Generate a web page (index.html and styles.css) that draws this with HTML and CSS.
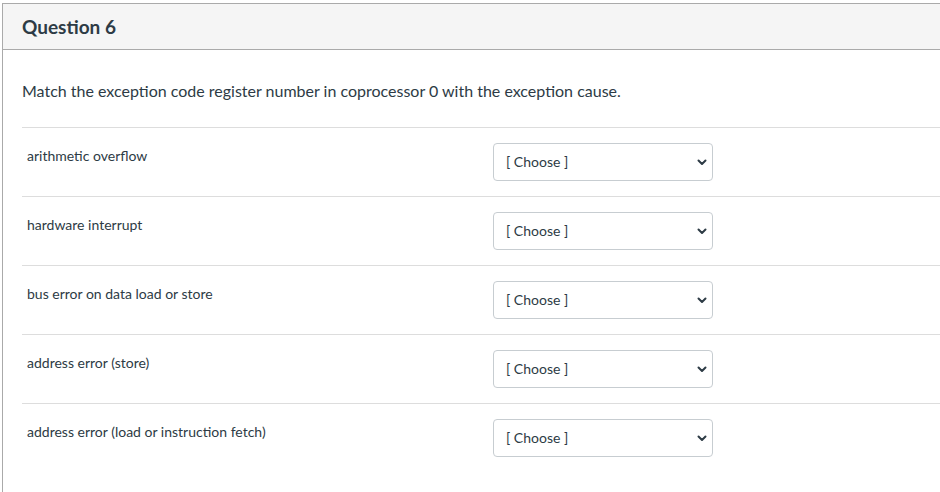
FILE: index.html
```html
<!DOCTYPE html>
<html>
<head>
<meta charset="utf-8">
<link rel="stylesheet" href="styles.css">
</head>
<body>
<div class="question">
  <div class="header">
    <h2 class="title">Question 6</h2>
  </div>
  <div class="content">
    <p class="prompt">Match the exception code register number in coprocessor 0 with the exception cause.</p>
    <div class="answers">
      <div class="row">
        <div class="label">arithmetic overflow</div>
        <div class="select-wrap">
          <select class="select"><option>[ Choose ]</option></select>
          <svg class="chev" width="10" height="7" viewBox="0 0 10 7"><path d="M1.5 1.5 L5 5 L8.5 1.5" fill="none" stroke="#2d3b45" stroke-width="2" stroke-linecap="round" stroke-linejoin="round"/></svg>
        </div>
      </div>
      <div class="row">
        <div class="label">hardware interrupt</div>
        <div class="select-wrap">
          <select class="select"><option>[ Choose ]</option></select>
          <svg class="chev" width="10" height="7" viewBox="0 0 10 7"><path d="M1.5 1.5 L5 5 L8.5 1.5" fill="none" stroke="#2d3b45" stroke-width="2" stroke-linecap="round" stroke-linejoin="round"/></svg>
        </div>
      </div>
      <div class="row">
        <div class="label">bus error on data load or store</div>
        <div class="select-wrap">
          <select class="select"><option>[ Choose ]</option></select>
          <svg class="chev" width="10" height="7" viewBox="0 0 10 7"><path d="M1.5 1.5 L5 5 L8.5 1.5" fill="none" stroke="#2d3b45" stroke-width="2" stroke-linecap="round" stroke-linejoin="round"/></svg>
        </div>
      </div>
      <div class="row">
        <div class="label">address error (store)</div>
        <div class="select-wrap">
          <select class="select"><option>[ Choose ]</option></select>
          <svg class="chev" width="10" height="7" viewBox="0 0 10 7"><path d="M1.5 1.5 L5 5 L8.5 1.5" fill="none" stroke="#2d3b45" stroke-width="2" stroke-linecap="round" stroke-linejoin="round"/></svg>
        </div>
      </div>
      <div class="row">
        <div class="label">address error (load or instruction fetch)</div>
        <div class="select-wrap">
          <select class="select"><option>[ Choose ]</option></select>
          <svg class="chev" width="10" height="7" viewBox="0 0 10 7"><path d="M1.5 1.5 L5 5 L8.5 1.5" fill="none" stroke="#2d3b45" stroke-width="2" stroke-linecap="round" stroke-linejoin="round"/></svg>
        </div>
      </div>
    </div>
  </div>
</div>
</body>
</html>
```

FILE: styles.css
```css
html, body {
  margin: 0;
  padding: 0;
  overflow: hidden;
  background: #fff;
  font-family: Lato, "Open Sans", sans-serif;
  color: #2d3b45;
}

.question {
  margin: 3px 0 0 2px;
  border-left: 1px solid #aaaaaa;
  border-top: 1px solid #aaaaaa;
  height: 489px;
  box-sizing: border-box;
  overflow: hidden;
}

.header {
  height: 45px;
  background: #f5f5f5;
  border-bottom: 1px solid #aaaaaa;
  display: flex;
  align-items: center;
  padding-left: 19px;
}

.title {
  margin: 0;
  font-size: 19px;
  font-weight: 700;
  line-height: 22px;
  color: #2d3b45;
}

.content {
  padding: 0 0 0 19px;
}

.prompt {
  margin: 0;
  padding-top: 31px;
  font-size: 16px;
  line-height: 20px;
  height: 46px;
}

.answers {
  display: flex;
  flex-direction: column;
}

.row {
  height: 68px;
  border-top: 1px solid #dddddd;
  display: grid;
  grid-template-columns: 471px 220px;
  align-items: start;
}

.label {
  padding-left: 5px;
  margin-top: 18px;
  font-size: 14px;
  line-height: 20px;
}

.select-wrap {
  position: relative;
  margin-top: 15px;
  height: 38px;
}

.select {
  appearance: none;
  -webkit-appearance: none;
  width: 220px;
  height: 38px;
  box-sizing: border-box;
  border: 1px solid #c7cdd1;
  border-radius: 4px;
  background: #fff;
  padding: 0 12px 2px;
  font-family: Lato, "Open Sans", sans-serif;
  font-size: 14px;
  color: #2d3b45;
}

.chev {
  position: absolute;
  right: 6px;
  top: 16px;
  pointer-events: none;
}
```
